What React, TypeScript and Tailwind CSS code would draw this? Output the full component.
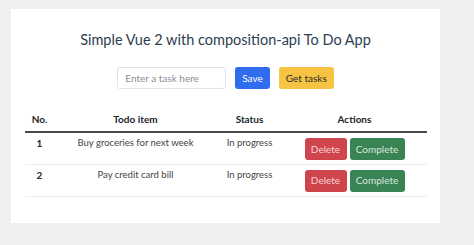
export default function App() {
  const todos = [
    { id: 1, text: "Buy groceries for next week", status: "In progress" },
    { id: 2, text: "Pay credit card bill", status: "In progress" },
  ];

  return (
    <div
      className="w-[474px] h-[245px] bg-[#efefef] pt-[9px] pl-[11px]"
      style={{ fontFamily: "Lato, 'Open Sans', sans-serif" }}
    >
      <div className="w-[429px] h-[214px] bg-white flex flex-col items-center pt-[21px]">
        <h1 className="text-[14.5px] leading-[20px] text-[#2c3e50]">
          Simple Vue 2 with composition-api To Do App
        </h1>

        <div className="flex items-center gap-[9px] mt-[17px]">
          <input
            className="w-[109px] h-[22px] border border-[#dfe3e8] rounded-[3px] px-[7px] text-[10px] text-[#555] placeholder:text-[#8a8f96] outline-none"
            placeholder="Enter a task here"
          />
          <button className="h-[22px] px-[7px] rounded-[3px] bg-[#2f6cf0] text-white text-[10px]">
            Save
          </button>
          <button className="h-[22px] px-[7px] rounded-[3px] bg-[#f6c342] text-[#2b2b2b] text-[10px]">
            Get tasks
          </button>
        </div>

        <table className="w-[402px] mt-[23px] text-[10px] text-[#212529] border-collapse">
          <thead>
            <tr className="border-b-2 border-[#4a4a4a]">
              <th className="w-[30px] font-bold h-[20px] align-top">No.</th>
              <th className="w-[162px] font-bold align-top">Todo item</th>
              <th className="w-[66px] font-bold align-top">Status</th>
              <th className="font-bold align-top">Actions</th>
            </tr>
          </thead>
          <tbody>
            {todos.map((t) => (
              <tr key={t.id} className="border-b border-[#eceef0] h-[32px]">
                <td className="text-center font-bold align-top pt-[3px]">{t.id}</td>
                <td className="text-center text-[9.5px] text-[#444] align-top pt-[3px]">{t.text}</td>
                <td className="text-center text-[9.5px] text-[#444] align-top pt-[3px]">{t.status}</td>
                <td className="align-top pt-[5px]">
                  <div className="flex justify-center gap-[3px]">
                    <button className="h-[22px] w-[42px] rounded-[3px] bg-[#d0444c] text-[#f3d6d8] text-[10px]">
                      Delete
                    </button>
                    <button className="h-[22px] w-[55px] rounded-[3px] bg-[#3a8354] text-[#d5e8dc] text-[10px]">
                      Complete
                    </button>
                  </div>
                </td>
              </tr>
            ))}
          </tbody>
        </table>
      </div>
    </div>
  );
}
